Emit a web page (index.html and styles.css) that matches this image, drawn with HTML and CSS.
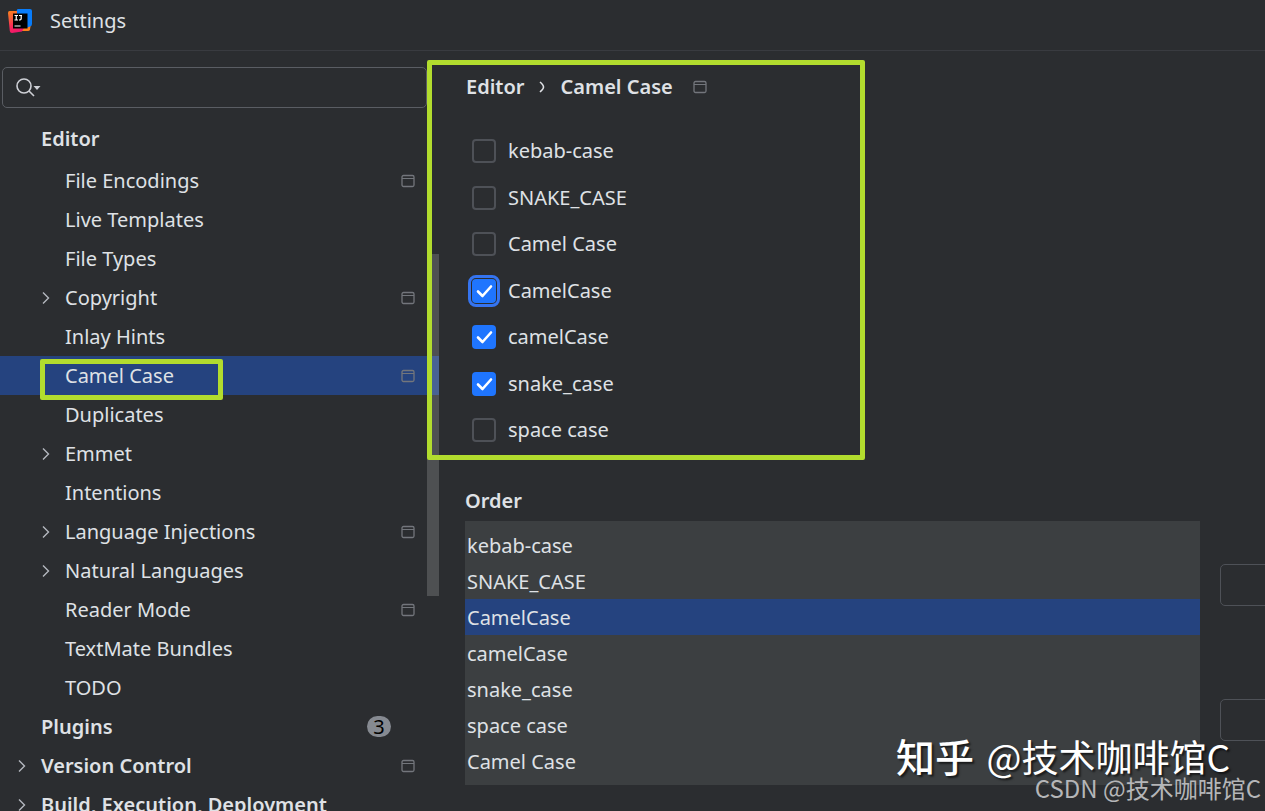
FILE: index.html
```html
<!DOCTYPE html>
<html lang="en">
<head>
  <meta charset="UTF-8">
  <meta name="viewport" content="width=device-width, initial-scale=1.0">
  <title>Settings</title>
  <link rel="stylesheet" href="styles.css">
</head>
<body>

<!-- Shared icons -->
<svg class="sprite" aria-hidden="true">
  <symbol id="project" viewBox="0 0 14 14">
    <rect x="1" y="1.5" width="12" height="11" rx="1.5" fill="none" stroke="currentColor" stroke-width="1.3"/>
    <path d="M1 4.5h12" stroke="currentColor"/>
  </symbol>
  <symbol id="chevron" viewBox="0 0 10 14">
    <path d="M2 1.5L7.5 7L2 12.5" fill="none" stroke="currentColor" stroke-width="1.4"/>
  </symbol>
</svg>

<header class="titlebar">
  <svg class="logo" viewBox="0 0 24 24" aria-hidden="true">
    <defs>
      <linearGradient id="warm" x1="0" y1="0" x2="0.3" y2="1">
        <stop offset="0" stop-color="#fc801d"/>
        <stop offset="0.35" stop-color="#f4603a"/>
        <stop offset="0.7" stop-color="#fe2857"/>
        <stop offset="1" stop-color="#f0186a"/>
      </linearGradient>
    </defs>
    <path d="M14 15h9l-1 5.500q-0.300 1.500-2 1.500h-7z" fill="#fc801d"/>
    <path d="M9.500 0H22q2 0 2 2v13q0 2-2 2.500L18 19L6 7z" fill="#087cfa"/>
    <path d="M1.500 2H9v15h8l-3 5.500L4 24q-2 0-2.200-2L0 4q0-2 1.500-2z" fill="url(#warm)"/>
    <rect x="5" y="4.500" width="14.500" height="15" fill="#000"/>
    <path d="M6.500 6.500h3.500M8.250 6.500v4.500M6.500 11h3.500M11 6.500h3M13.200 6.500v3q0 1.500-2.200 1.500M6.500 17h6" fill="none" stroke="#fff" stroke-width="1.200"/>
  </svg>
  <h1>Settings</h1>
</header>

<div class="layout">
  <aside class="sidebar">
    <label class="search">
      <svg viewBox="0 0 26 20" aria-hidden="true">
        <circle cx="8" cy="8" r="7" fill="none" stroke="currentColor" stroke-width="1.6"/>
        <path d="M13 13l5 5" stroke="currentColor" stroke-width="1.600"/>
        <path d="M17.500 8h7l-3.500 4z" fill="currentColor"/>
      </svg>
      <input type="search" aria-label="Search settings">
    </label>

    <nav class="tree">
      <a class="group sticky" href="#">Editor</a>
      <a href="#">File Encodings <svg class="project"><use href="#project"/></svg></a>
      <a href="#">Live Templates</a>
      <a href="#">File Types</a>
      <a href="#"><svg class="chevron"><use href="#chevron"/></svg>Copyright <svg class="project"><use href="#project"/></svg></a>
      <a href="#">Inlay Hints</a>
      <a class="selected" href="#">Camel Case <svg class="project"><use href="#project"/></svg></a>
      <a href="#">Duplicates</a>
      <a href="#"><svg class="chevron"><use href="#chevron"/></svg>Emmet</a>
      <a href="#">Intentions</a>
      <a href="#"><svg class="chevron"><use href="#chevron"/></svg>Language Injections <svg class="project"><use href="#project"/></svg></a>
      <a href="#"><svg class="chevron"><use href="#chevron"/></svg>Natural Languages</a>
      <a href="#">Reader Mode <svg class="project"><use href="#project"/></svg></a>
      <a href="#">TextMate Bundles</a>
      <a href="#">TODO</a>
      <a class="group" href="#">Plugins <span class="count">3</span></a>
      <a class="group" href="#"><svg class="chevron"><use href="#chevron"/></svg>Version Control <svg class="project"><use href="#project"/></svg></a>
      <a class="group" href="#"><svg class="chevron"><use href="#chevron"/></svg>Build, Execution, Deployment</a>
    </nav>
    <div class="scrollbar"></div>
  </aside>

  <main class="content">
    <section class="cases">
      <h2 class="breadcrumb">
        Editor
        <svg class="separator" viewBox="0 0 6 12"><path d="M1 1Q4.500 4 4.500 6T1 11" fill="none" stroke="currentColor" stroke-width="1.6"/></svg>
        Camel Case
        <svg class="project"><use href="#project"/></svg>
      </h2>
      <div class="options">
        <label><input type="checkbox">kebab-case</label>
        <label><input type="checkbox">SNAKE_CASE</label>
        <label><input type="checkbox">Camel Case</label>
        <label><input type="checkbox" class="focused" checked>CamelCase</label>
        <label><input type="checkbox" checked>camelCase</label>
        <label><input type="checkbox" checked>snake_case</label>
        <label><input type="checkbox">space case</label>
      </div>
    </section>

    <section class="order">
      <h2 id="order-title">Order</h2>
      <div class="order-row">
        <ul class="order-list" role="listbox" aria-labelledby="order-title">
          <li role="option">kebab-case</li>
          <li role="option">SNAKE_CASE</li>
          <li role="option" aria-selected="true">CamelCase</li>
          <li role="option">camelCase</li>
          <li role="option">snake_case</li>
          <li role="option">space case</li>
          <li role="option">Camel Case</li>
        </ul>
        <div class="order-buttons">
          <button type="button" aria-label="Up"></button>
          <button type="button" aria-label="Down"></button>
        </div>
      </div>
    </section>
  </main>
</div>

<div class="credit credit-large"><b>知乎</b> @技术咖啡馆C</div>
<div class="credit credit-small">CSDN @技术咖啡馆C</div>

</body>
</html>
```

FILE: styles.css
```css
* {
  box-sizing: border-box;
}
body {
  margin: 0;
  height: 100vh;
  display: flex;
  flex-direction: column;
  overflow: hidden;
  background: #2b2d30;
  color: #dfe1e5;
  font-family: "Noto Sans", "Noto Sans CJK SC", sans-serif;
  font-size: 20px;
  line-height: 24px;
}
h1, h2 {
  margin: 0;
  font-size: 20px;
  line-height: 24px;
}
h1 {
  font-weight: 400;
}
h2 {
  font-weight: 600;
}
.sprite {
  position: absolute;
  width: 0;
  height: 0;
}
.project {
  width: 14px;
  height: 14px;
  color: #73767c;
}

/* Title bar */
.titlebar {
  flex: none;
  display: flex;
  align-items: center;
  gap: 18px;
  height: 51px;
  padding: 0 8px 8px;
  border-bottom: 1px solid #393b40;
}
.logo {
  width: 24px;
  height: 24px;
}
.layout {
  flex: 1;
  display: flex;
  min-height: 0;
}

/* Sidebar */
.sidebar {
  position: relative;
  flex: none;
  width: 439px;
  padding-top: 16px;
  overflow: hidden;
}
.search {
  display: flex;
  align-items: center;
  gap: 8px;
  height: 41px;
  margin: 0 12px 0 2px;
  padding: 0 13px;
  border: 1px solid #5a5d63;
  border-radius: 5px;
  color: #ced0d6;
}
.search svg {
  width: 26px;
  height: 20px;
}
.search input {
  flex: 1;
  min-width: 0;
  border: none;
  outline: none;
  background: none;
  color: inherit;
  font: inherit;
}
.tree {
  padding-top: 11px;
}
.tree a {
  position: relative;
  display: flex;
  align-items: center;
  height: 39px;
  padding: 0 24px 0 65px;
  color: inherit;
  text-decoration: none;
  white-space: nowrap;
}
.tree .group {
  padding-left: 41px;
  font-weight: 600;
}
.tree .sticky {
  margin-bottom: 3px;
}
.tree .chevron {
  width: 10px;
  height: 14px;
  margin: 0 14px 0 -24px;
  color: #b4b8bf;
}
.tree .project {
  margin-left: auto;
}
.tree .selected {
  background: #25437f;
}
.tree .selected::after {
  content: "";
  box-sizing: border-box;
  position: absolute;
  left: 40px;
  top: 3px;
  width: 183px;
  height: 41px;
  border: 5px solid #b2dc2e;
  border-radius: 2px;
  z-index: 1;
}
.count {
  width: 24px;
  height: 21px;
  margin: 0 24px 0 auto;
  border-radius: 11px;
  background: #868a91;
  color: #000;
  font-weight: 400;
  line-height: 21px;
  text-align: center;
}
.scrollbar {
  position: absolute;
  top: 203px;
  right: 0;
  width: 12px;
  height: 342px;
  background: rgba(255, 255, 255, 0.17);
}

/* Content */
.content {
  flex: 1;
  min-width: 0;
}
.cases {
  position: relative;
  width: 438px;
  margin: 9px 0 0 -12px;
  padding: 10px 34px 13px;
  border: 5px solid #b2dc2e;
  border-radius: 2px;
}
.breadcrumb {
  display: flex;
  align-items: center;
  gap: 15px;
}
.separator {
  width: 6px;
  height: 12px;
}
.breadcrumb .project {
  margin-left: 5px;
}
.options {
  display: flex;
  flex-direction: column;
  justify-content: space-between;
  height: 303px;
  margin: 40px 0 0 6px;
}
.options label {
  display: flex;
  align-items: center;
  gap: 12px;
}
.options input {
  appearance: none;
  width: 24px;
  height: 24px;
  margin: 0;
  border: 2px solid #4e5157;
  border-radius: 4px;
}
.options input:checked {
  border: none;
  background: #1f75fe url("data:image/svg+xml,%3Csvg xmlns='http://www.w3.org/2000/svg' viewBox='0 0 24 24'%3E%3Cpath d='M6 12.500l4.500 4.500L19 7.500' fill='none' stroke='white' stroke-width='2.600' stroke-linecap='round' stroke-linejoin='round'/%3E%3C/svg%3E");
}
.options .focused {
  outline: 3px solid #3574f0;
  outline-offset: 1px;
}

/* Order list */
.order {
  padding: 29px 0 0 26px;
}
.order-row {
  display: flex;
  gap: 20px;
  margin-top: 8px;
}
.order-list {
  flex: 1;
  margin: 0;
  padding: 6px 0;
  background: #3c3f41;
  list-style: none;
}
.order-list li {
  padding: 7px 2px 5px;
}
.order-list [aria-selected="true"] {
  background: #25437f;
}
.order-buttons {
  display: flex;
  flex-direction: column;
  gap: 93px;
  width: 45px;
  padding-top: 43px;
}
.order-buttons button {
  width: 90px;
  height: 42px;
  border: 1px solid #4e5157;
  border-radius: 5px;
  background: none;
}

/* Credits over the page */
.credit {
  position: absolute;
  font-family: "Noto Sans CJK SC", sans-serif;
  white-space: nowrap;
}
.credit-large {
  right: 35px;
  bottom: 31px;
  color: #fff;
  font-size: 37px;
  line-height: 48px;
  text-shadow: 2px 2px 2px rgba(0, 0, 0, 0.6);
}
.credit-large b {
  margin-right: 4px;
  font-size: 39px;
  font-weight: 500;
}
.credit-small {
  right: 4px;
  bottom: 7px;
  color: #b5b6b8;
  font-size: 24px;
  line-height: 32px;
}
```
